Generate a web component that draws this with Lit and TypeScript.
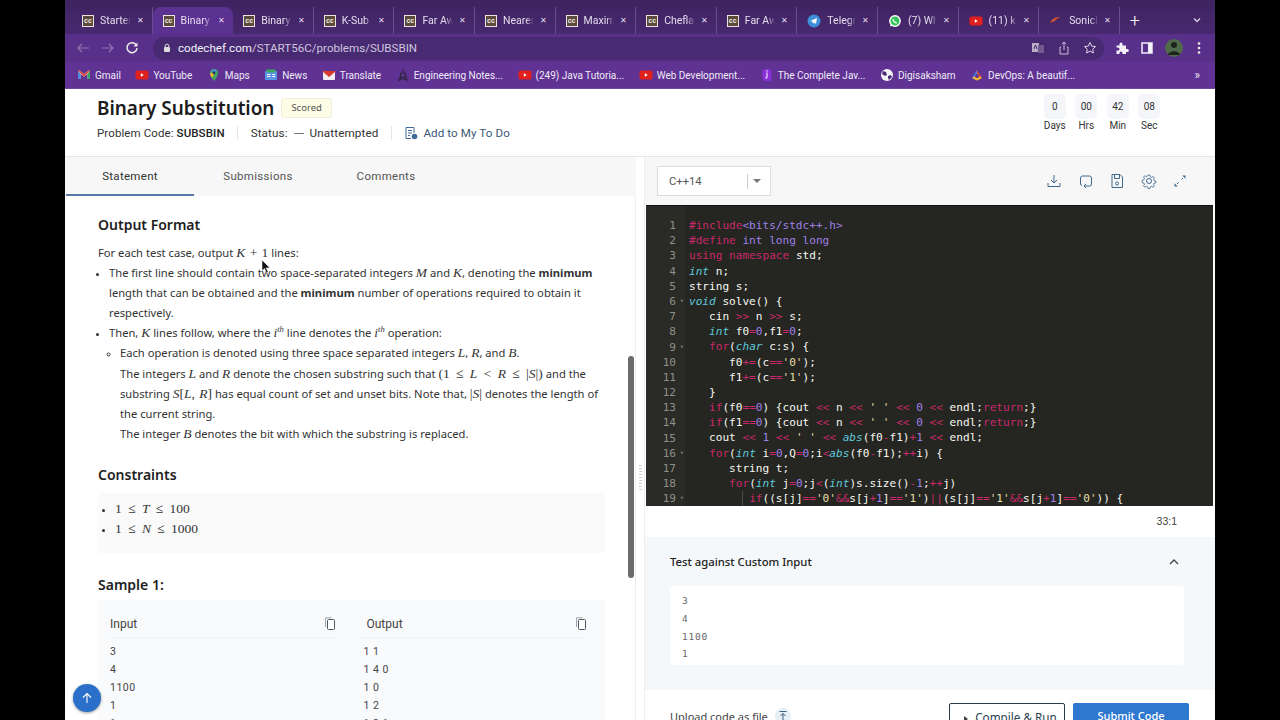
import { css, html, LitElement, svg } from "lit";
import { customElement } from "lit/decorators.js";

const ccIcon = html`<span class="cc">cc</span>`;

const tgIcon = svg`<circle cx="7" cy="7" r="6.5" fill="#3a8fd8"/><path d="M3 7l7-3-1 6-2-1.500-1 1.500-.5-2.500z" fill="#fff"/>`;
const waIcon = svg`<circle cx="7" cy="7" r="5.200" fill="#35c45a" stroke="#fff" stroke-width="1.400"/><path d="M2 12.500l1-3 2 2z" fill="#fff"/><path d="M5 5c0 2 2 4 4 4" stroke="#fff" stroke-width="1.200" fill="none"/>`;
const ytIcon = svg`<rect x="0.500" y="2.500" width="13" height="9" rx="2" fill="#e0201c"/><path d="M5.800 5.200v3.600l3-1.800z" fill="#fff"/>`;
const sonicIcon = svg`<path d="M1 9c2-5 6-6 11-6-4 1-6 3-7 5-1-1-2 0-4 1z" fill="#d8542a"/>`;
const gmailIcon = svg`<path d="M1 3v8h2.500V6L7 8.700 10.500 6v5H13V3l-1.500-.5L7 6 2.500 2.500z" fill="#d8dce0"/><path d="M1 3l2.500 3v5H1z" fill="#4c8be0"/><path d="M13 3l-2.500 3v5H13z" fill="#3aa860"/><path d="M1 3l1.500-.5L7 6l4.500-3.500L13 3 7 8.700z" fill="#dc4a3c"/>`;
const mapsIcon = svg`<path d="M7 1a4 4 0 0 1 4 4c0 3-4 8-4 8S3 8 3 5a4 4 0 0 1 4-4z" fill="#3aa860"/><path d="M4 3l3 2 3-2.500A4 4 0 0 0 4 3z" fill="#4c8be0"/><path d="M3 5c0 1.500 1 3.300 2 5l3-5z" fill="#eabb30"/><circle cx="7" cy="5" r="1.400" fill="#3b2a5e"/>`;
const newsIcon = svg`<rect x="1" y="3" width="12" height="9" rx="1" fill="#5a94e8"/><rect x="2.500" y="1.500" width="9" height="3" fill="#3aa860"/><path d="M3 6.500h3.500M3 8.500h3.500M8 6.500h3M8 8.500h3" stroke="#fff" stroke-width="1"/>`;
const translateIcon = svg`<rect x="1" y="3" width="12" height="9" rx="1" fill="#f0eef2"/><path d="M1 3l6 5 6-5" fill="#d83a30"/><path d="M1 3l6 5 6-5" stroke="#d83a30" stroke-width="1.500" fill="none"/>`;
const engIcon = svg`<path d="M7 1v3M5 5h4l1 4H4zM3 13l3-4M11 13l-3-4M2 11h10" stroke="#2b2238" stroke-width="1.100" fill="none"/>`;
const jsIcon = svg`<rect x="2.500" y="1" width="9" height="12" rx="3" fill="#8a30d8"/><path d="M7 4.500v5c0 1-1.500 1-1.500 0" stroke="#fff" fill="none"/><circle cx="7" cy="3" r=".7" fill="#fff"/>`;
const digiIcon = svg`<circle cx="7" cy="7" r="6" fill="#f5f5f5"/><path d="M3 3l3 1 1 3-2 1-3-2zM8 8l3-1 1 2-3 3-1-2z" fill="#4b2a78"/>`;
const devIcon = svg`<path d="M7 2l5 8-5 2.500z" fill="#e8483a"/><path d="M7 2L2 10l5 2.500z" fill="#3f86e8"/><path d="M2 10l5 2.500 5-2.500-5-3z" fill="#f0b429"/><circle cx="7" cy="8" r="2" fill="#5f3294"/>`;

const tabs: [string, any][] = [
  ["Starter", ccIcon],
  ["Binary", ccIcon],
  ["Binary", ccIcon],
  ["K-Sub", ccIcon],
  ["Far Aw", ccIcon],
  ["Neares", ccIcon],
  ["Maxim", ccIcon],
  ["Chefla", ccIcon],
  ["Far Aw", ccIcon],
  ["Telegr", html`<svg width="14" height="14" viewBox="0 0 14 14">${tgIcon}</svg>`],
  ["(7) Wh", html`<svg width="14" height="14" viewBox="0 0 14 14">${waIcon}</svg>`],
  ["(11) k-", html`<svg width="14" height="14" viewBox="0 0 14 14">${ytIcon}</svg>`],
  ["Sonick", html`<svg width="14" height="14" viewBox="0 0 14 14">${sonicIcon}</svg>`],
];

const bookmarks: [string, any][] = [
  ["Gmail", gmailIcon],
  ["YouTube", ytIcon],
  ["Maps", mapsIcon],
  ["News", newsIcon],
  ["Translate", translateIcon],
  ["Engineering Notes...", engIcon],
  ["(249) Java Tutoria...", ytIcon],
  ["Web Development...", ytIcon],
  ["The Complete Jav...", jsIcon],
  ["Digisaksham", digiIcon],
  ["DevOps: A beautif...", devIcon],
];

const code = [
  "#include<bits/stdc++.h>",
  "#define int long long",
  "using namespace std;",
  "int n;",
  "string s;",
  "void solve() {",
  "   cin >> n >> s;",
  "   int f0=0,f1=0;",
  "   for(char c:s) {",
  "      f0+=(c=='0');",
  "      f1+=(c=='1');",
  "   }",
  "   if(f0==0) {cout << n << ' ' << 0 << endl;return;}",
  "   if(f1==0) {cout << n << ' ' << 0 << endl;return;}",
  "   cout << 1 << ' ' << abs(f0-f1)+1 << endl;",
  "   for(int i=0,Q=0;i<abs(f0-f1);++i) {",
  "      string t;",
  "      for(int j=0;j<(int)s.size()-1;++j)",
  "         if((s[j]=='0'&&s[j+1]=='1')||(s[j]=='1'&&s[j+1]=='0')) {",
];
const foldLines = [6, 9, 16, 19];

// small regex highlighter, monokai-ish classes
const tokenRe =
  /(#include|#define|\busing\b|\bnamespace\b|\breturn\b|\bif\b|\bfor\b)|(\bint\b|\bchar\b|\bvoid\b|\babs\b)|('.')|(\b\d+\b)|(>>|<<|==|\+=|\+\+|&&|\|\||=|\+|-|<)/g;

function highlight(line: string) {
  if (line.startsWith("#include")) {
    return html`<span class="k">#include</span><span class="p">${line.slice(8)}</span>`;
  }
  if (line.startsWith("#define")) {
    return html`<span class="k">#define</span><span class="p">${line.slice(7)}</span>`;
  }
  const parts: unknown[] = [];
  let last = 0;
  for (const m of line.matchAll(tokenRe)) {
    parts.push(line.slice(last, m.index));
    const cls = m[1] ? "k" : m[2] ? "t" : m[3] ? "s" : m[4] ? "p" : "k";
    parts.push(html`<span class=${cls}>${m[0]}</span>`);
    last = m.index! + m[0].length;
  }
  parts.push(line.slice(last));
  return parts;
}

@customElement("app-root")
export class AppRoot extends LitElement {
  renderBrowser() {
    return html`<div class="tabstrip">
        ${tabs.map(
          ([name, icon], i) => html`<div class="tab ${i === 1 ? "on" : ""}">
            ${icon}<span class="tabname">${name}</span><span class="x">✕</span>
          </div>`
        )}
        <span class="plus">+</span>
        <svg class="tabdown" width="10" height="10" viewBox="0 0 10 10">
          <path d="M2 3.500l3 3 3-3" stroke="#d8cfe6" stroke-width="1.300" fill="none" />
        </svg>
      </div>
      <div class="toolbar">
        <svg width="16" height="14" viewBox="0 0 16 14"><path d="M14 7H3M7 3L3 7l4 4" stroke="#8d74ad" stroke-width="1.200" fill="none" /></svg>
        <svg width="16" height="14" viewBox="0 0 16 14"><path d="M2 7h11M9 3l4 4-4 4" stroke="#8d74ad" stroke-width="1.200" fill="none" /></svg>
        <svg width="14" height="14" viewBox="0 0 14 14"><path d="M11.500 4.500A5 5 0 1 0 12 7" stroke="#eee" stroke-width="1.500" fill="none" /><path d="M12.500 1.500v4h-4z" fill="#eee" /></svg>
        <div class="omnibox">
          <svg width="8" height="10" viewBox="0 0 8 10"><rect x="1" y="4" width="6" height="5" rx="1" fill="#ddd" /><path d="M2.200 4V3a1.800 1.800 0 0 1 3.600 0v1" stroke="#ddd" fill="none" /></svg>
          <span class="url"><b>codechef.com</b>/START56C/problems/SUBSBIN</span>
          <span class="omniright">
            <svg width="14" height="14" viewBox="0 0 14 14"><rect x="1" y="2" width="7" height="9" fill="#b9afc7" /><rect x="7" y="4" width="6" height="8" fill="#6f5a8f" /><path d="M3 8l1.500-4L6 8" stroke="#4a2a72" fill="none" /></svg>
            <svg width="14" height="14" viewBox="0 0 14 14"><path d="M4 6H3v7h8V6h-1M7 9V1M5 3l2-2 2 2" stroke="#c9bdd8" fill="none" /></svg>
            <svg width="14" height="14" viewBox="0 0 14 14"><path d="M7 1.500l1.700 3.600 3.800.5-2.800 2.600.7 3.800L7 10.100 3.600 12l.7-3.800L1.500 5.600l3.800-.5z" stroke="#dcd4e6" fill="none" /></svg>
          </span>
        </div>
        <span class="extras">
          <svg width="14" height="14" viewBox="0 0 14 14"><path d="M1.500 4.500h3V3a1.500 1.500 0 0 1 3 0v1.500h3.500V8h1.300a1.500 1.500 0 0 1 0 3H11v2H7.500v-1a1.500 1.500 0 0 0-3 0v1h-3V9.500H3a1.500 1.500 0 0 0 0-3H1.500z" fill="#f4f0f8" /></svg>
          <svg width="14" height="14" viewBox="0 0 14 14"><rect x="2" y="2" width="10" height="10" fill="none" stroke="#f4f0f8" stroke-width="1.500" /><rect x="8" y="2" width="4" height="10" fill="#f4f0f8" /></svg>
          <svg width="18" height="18" viewBox="0 0 18 18"><circle cx="9" cy="9" r="9" fill="#4f6b4a" /><circle cx="9" cy="6" r="3" fill="#1d241c" /><path d="M3 16c1-5 11-5 12 0z" fill="#1d241c" /></svg>
          <svg class="dots" width="4" height="14" viewBox="0 0 4 14"><circle cx="2" cy="2.500" r="1.300" fill="#eee" /><circle cx="2" cy="7" r="1.300" fill="#eee" /><circle cx="2" cy="11.500" r="1.300" fill="#eee" /></svg>
        </span>
      </div>
      <div class="bookmarks">
        ${bookmarks.map(
          ([name, icon]) => html`<span class="bm"
            ><svg width="14" height="14" viewBox="0 0 14 14">${icon}</svg>${name}</span
          >`
        )}
        <span class="more">»</span>
      </div>`;
  }

  renderHeader() {
    const clock = [
      ["0", "Days"],
      ["00", "Hrs"],
      ["42", "Min"],
      ["08", "Sec"],
    ];
    return html`<header class="head">
      <div>
        <div class="titlerow">
          <h1>Binary Substitution</h1>
          <span class="badge">Scored</span>
        </div>
        <div class="meta">
          <span class="code">Problem Code: <b>SUBSBIN</b></span>
          <span class="status">Status: <i class="dash"></i> Unattempted</span>
          <span class="todo">
            <svg width="14" height="14" viewBox="0 0 14 14">
              <path d="M10 7V1.500H2v11h5M4 4.500h4M4 7h4M4 9.500h2" stroke="#3f6a9a" fill="none" />
              <circle cx="10.500" cy="10.500" r="2.800" fill="#3f6a9a" />
            </svg>
            Add to My To Do
          </span>
        </div>
      </div>
      <div class="clock">
        ${clock.map(
          ([n, l]) => html`<div class="unit"><span class="num">${n}</span><span>${l}</span></div>`
        )}
      </div>
    </header>`;
  }

  renderStatement() {
    return html`<section class="left">
      <nav class="lefttabs">
        <span class="ltab on">Statement</span>
        <span class="ltab">Submissions</span>
        <span class="ltab">Comments</span>
      </nav>
      <div class="leftbody">
        <article class="doc">
          <h2 class="first">Output Format</h2>
          <p>For each test case, output <span class="mr tight"><i>K</i> + 1</span> lines:</p>
          <ul>
            <li>
              The first line should contain two space-separated integers <i class="m">M</i> and
              <i class="m">K</i>, denoting the <b>minimum</b> length that can be obtained and the
              <b>minimum</b> number of operations required to obtain it respectively.
            </li>
            <li>
              Then, <i class="m">K</i> lines follow, where the <i class="m">i</i><sup>th</sup> line
              denotes the <i class="m">i</i><sup>th</sup> operation:
              <ul class="sub">
                <li>
                  Each operation is denoted using three space separated integers <i class="m">L</i>,
                  <i class="m">R</i>, and <i class="m">B</i>.<br />
                  The integers <i class="m">L</i> and <i class="m">R</i> denote the chosen substring
                  such that <span class="mr">(1 ≤ <i>L</i> &lt; <i>R</i> ≤ |<i>S</i>|)</span> and the
                  substring <span class="mr tight"><i>S</i>[<i>L</i>, <i>R</i>]</span> has equal count of
                  set and unset bits. Note that, <span class="mr">|<i>S</i>|</span> denotes the
                  length of the current string.<br />
                  The integer <i class="m">B</i> denotes the bit with which the substring is
                  replaced.
                </li>
              </ul>
            </li>
          </ul>
          <h2 class="cons">Constraints</h2>
          <ul class="limits">
            <li><span class="mr">1 ≤ <i>T</i> ≤ 100</span></li>
            <li><span class="mr">1 ≤ <i>N</i> ≤ 1000</span></li>
          </ul>
          <h2 class="samp">Sample 1:</h2>
          <div class="sample">
            <div class="scol">
              <div class="shead">Input ${this.copyIcon()}</div>
              <pre class="io">3
4
1100
1
1</pre>
            </div>
            <div class="scol out">
              <div class="shead">Output ${this.copyIcon()}</div>
              <pre class="io">1 1
1 4 0
1 0
1 2
1 3 1</pre>
            </div>
          </div>
        </article>
        <div class="scrollbar"><div class="thumb"></div></div>
      </div>
    </section>`;
  }

  copyIcon() {
    return html`<svg width="12" height="13" viewBox="0 0 12 13">
      <path d="M1.500 10V.8h6" stroke="#9aa3ad" fill="none" />
      <rect x="3.500" y="2.500" width="7" height="10" rx="1" stroke="#4c5660" fill="#fff" />
    </svg>`;
  }

  renderEditor() {
    return html`<section class="right">
      <div class="edbar">
        <div class="select">
          <span>C++14</span>
          <i class="caret"></i>
        </div>
        <div class="tools">
          <svg width="16" height="16" viewBox="0 0 16 16"><path d="M8 2v8M5 7l3 3 3-3M2 10v3.500h12V10" /></svg>
          <svg width="16" height="16" viewBox="0 0 16 16"><path d="M4 12.500A2 2 0 0 1 2.500 11V5A2 2 0 0 1 4.500 3h7a2 2 0 0 1 2 2v6a2 2 0 0 1-2 2H6M8 11l-2 2 2 2" /></svg>
          <svg width="16" height="16" viewBox="0 0 16 16"><path d="M3 1.500h8l2.500 2.500v10.500H3zM5.500 1.500v4h5v-4" /><circle cx="8" cy="10.500" r="1.500" /></svg>
          <svg width="16" height="16" viewBox="0 0 16 16"><circle cx="8" cy="8" r="2.500" /><path d="M6.800 1h2.400l.4 2 1.500.7 1.800-1.100 1.600 1.700-1.100 1.700.7 1.500 2 .4v2.200l-2 .4-.7 1.500 1.100 1.700-1.600 1.700-1.800-1.100-1.500.7-.4 2H6.800l-.4-2-1.500-.7-1.800 1.100-1.600-1.700 1.100-1.700-.7-1.500-2-.4V6.900l2-.4.7-1.500-1.100-1.700 1.600-1.700 1.800 1.100 1.500-.7z" transform="translate(1.300 1.300) scale(.84)" /></svg>
          <svg width="16" height="16" viewBox="0 0 16 16"><path class="fill" d="M13.500 2.500v3.200l-3.200-3.200zM2.500 13.500v-3.200l3.200 3.200z" /><path d="M11 5l-1.500 1.500M5 11l1.500-1.500" /></svg>
        </div>
      </div>
      <div class="editor">
        <div class="gutter">
          ${code.map(
            (_, i) => html`<div class="gl">
              ${i + 1}<span class="fold">${foldLines.includes(i + 1) ? "▾" : ""}</span>
            </div>`
          )}
        </div>
        <pre class="src">${code.map(
          (l, i) => html`<div class="cl ${i === 18 ? "guide" : ""}">${highlight(l)}</div>`
        )}</pre>
      </div>
      <div class="pos">33:1</div>
      <div class="custom">
        <div class="chead">
          <span>Test against Custom Input</span>
          <svg width="12" height="12" viewBox="0 0 12 12"><path d="M2 8l4-4 4 4" stroke="#444" stroke-width="1.300" fill="none" /></svg>
        </div>
        <pre class="cinput">3
4
1100
1</pre>
      </div>
      <div class="actions">
        <span class="upload">
          Upload code as file
          <i class="upicon">
            <svg width="12" height="12" viewBox="0 0 12 12"><path d="M2.500 1.500h7M6 11V3.500M3.500 6L6 3.500 8.500 6" stroke="#3f5f80" fill="none" /></svg>
          </i>
        </span>
        <span class="btns">
          <span class="btn ghost"><i class="play"></i>Compile &amp; Run</span>
          <span class="btn solid">Submit Code</span>
        </span>
      </div>
    </section>`;
  }

  render() {
    return html`<div class="frame">
      ${this.renderBrowser()}
      <div class="page">
        ${this.renderHeader()}
        <div class="work">
          ${this.renderStatement()}
          <div class="split"><i></i></div>
          ${this.renderEditor()}
        </div>
        <button class="fab">
          <svg width="12" height="12" viewBox="0 0 12 12"><path d="M6 11V1.500M2 5.500l4-4 4 4" stroke="#fff" stroke-width="1.100" fill="none" /></svg>
        </button>
        <svg class="pointer" width="10" height="14" viewBox="0 0 10 14"><path d="M1 0v11l2.500-2.500L5.500 13l1.800-.8-2-4.300H9z" fill="#111" stroke="#fff" stroke-width=".6" /></svg>
      </div>
    </div>`;
  }

  static styles = css`
    :host {
      display: block;
      width: 1280px;
      height: 720px;
      overflow: hidden;
      background: #000;
      font-family: "Noto Sans", sans-serif;
      color: #222;
    }
    svg {
      display: block;
      flex: none;
    }
    .frame {
      width: 1150px;
      height: 720px;
      margin-left: 65px;
      display: flex;
      flex-direction: column;
      overflow: hidden;
    }

    /* browser chrome */
    .tabstrip {
      height: 34px;
      flex: none;
      display: flex;
      align-items: flex-end;
      padding-left: 7px;
      background: linear-gradient(#3d2360, #48296f);
      box-sizing: border-box;
    }
    .tab {
      width: 80.6px;
      height: 27px;
      box-sizing: border-box;
      display: flex;
      align-items: center;
      padding: 0 8px 0 10px;
      gap: 6px;
      font: 10.5px Roboto, sans-serif;
      color: #e4dcee;
      border-right: 1px solid #6a4d8e;
    }
    .tab.on {
      background: #5b3191;
      border-radius: 8px 8px 0 0;
      border-right: 0;
    }
    .cc {
      width: 12px;
      height: 12px;
      flex: none;
      box-sizing: border-box;
      border: 1px solid #e9e4dc;
      background: #5c4a3c;
      color: #f0ebe2;
      font: bold 7px/9px "Liberation Sans", sans-serif;
      text-align: center;
    }
    .tabname {
      width: 34px;
      overflow: hidden;
      white-space: nowrap;
      -webkit-mask-image: linear-gradient(90deg, #000 75%, transparent);
      mask-image: linear-gradient(90deg, #000 75%, transparent);
    }
    .x {
      font-size: 8px;
      margin-left: auto;
      color: #e4dcee;
    }
    .plus {
      color: #fff;
      font: 300 18px/27px Roboto, sans-serif;
      margin-left: 10px;
      width: 50px;
    }
    .tabdown {
      margin-left: auto;
      margin-right: 13px;
      margin-bottom: 9px;
    }
    .toolbar {
      height: 28px;
      flex: none;
      display: flex;
      align-items: center;
      padding-left: 10px;
      gap: 9px;
      background: #58308a;
    }
    .omnibox {
      flex: none;
      width: 951px;
      margin-left: 5px;
      height: 23px;
      border-radius: 12px;
      background: #472a72;
      display: flex;
      align-items: center;
      padding: 0 7px 0 10px;
      box-sizing: border-box;
      gap: 7px;
    }
    .url {
      font: 11.6px Roboto, sans-serif;
      color: #cfc4de;
    }
    .url b {
      font-weight: 400;
      color: #f4f0f8;
    }
    .omniright {
      margin-left: auto;
      display: flex;
      gap: 12px;
    }
    .extras {
      display: flex;
      align-items: center;
      gap: 11px;
      margin-left: 2px;
    }
    .dots {
      margin-left: 3px;
    }
    .bookmarks {
      height: 27px;
      flex: none;
      display: flex;
      align-items: center;
      gap: 14.5px;
      padding-left: 12px;
      background: #5f3294;
      border-bottom: 1px solid #6d4aa0;
      box-sizing: border-box;
      font: 10px Roboto, sans-serif;
      color: #f0ebf6;
      white-space: nowrap;
    }
    .bm {
      display: flex;
      align-items: center;
      gap: 4px;
    }
    .more {
      margin-left: auto;
      margin-right: 15px;
      font-size: 12px;
    }

    /* page */
    .page {
      flex: 1;
      min-height: 0;
      position: relative;
      background: #fff;
      display: flex;
      flex-direction: column;
    }
    .head {
      height: 68px;
      flex: none;
      box-sizing: border-box;
      border-bottom: 1px solid #e6e6e8;
      display: flex;
      justify-content: space-between;
      padding: 5px 50px 0 32px;
    }
    .titlerow {
      display: flex;
      align-items: center;
      gap: 7px;
      height: 28px;
    }
    h1 {
      margin: 0;
      font: 600 18.9px "Noto Sans", sans-serif;
      color: #1c1c1c;
    }
    .badge {
      font: 9.500px/18px "Noto Sans", sans-serif;
      padding: 0 9px;
      border: 1px solid #eeeedd;
      border-radius: 3px;
      background: #fdfde6;
      color: #555;
    }
    .meta {
      display: flex;
      align-items: center;
      margin-top: 4px;
      font: 11.500px Roboto, sans-serif;
      color: #333;
      letter-spacing: 0.1px;
    }
    .meta b {
      font-weight: 500;
      color: #222;
    }
    .code {
      padding-right: 12px;
      border-right: 1px solid #e4e4e4;
    }
    .status {
      padding: 0 13px;
      border-right: 1px solid #e4e4e4;
      display: flex;
      align-items: center;
      gap: 6px;
      font-size: 11.7px;
    }
    .dash {
      width: 10px;
      height: 1px;
      background: #777;
    }
    .todo {
      display: flex;
      align-items: center;
      gap: 5px;
      padding-left: 12px;
      color: #3c5876;
      font-size: 11.6px;
    }
    .clock {
      display: flex;
      font: 10px Roboto, sans-serif;
      color: #333;
    }
    .unit {
      width: 31.500px;
      display: flex;
      flex-direction: column;
      align-items: center;
      gap: 1px;
    }
    .num {
      width: 22px;
      height: 25px;
      line-height: 25px;
      text-align: center;
      border-radius: 5px;
      background: #f4f6fa;
    }
    .work {
      flex: 1;
      min-height: 0;
      display: grid;
      grid-template-columns: 571px 9px 570px;
    }
    .left {
      display: flex;
      flex-direction: column;
      min-height: 0;
      overflow: hidden;
    }
    .lefttabs {
      height: 39px;
      flex: none;
      display: flex;
      background: #f7f7f8;
      font: 11.500px Roboto, sans-serif;
      color: #555;
      letter-spacing: 0.3px;
      box-sizing: border-box;
      padding-left: 1px;
    }
    .ltab {
      width: 128px;
      text-align: center;
      line-height: 39px;
      box-sizing: border-box;
    }
    .ltab.on {
      color: #333;
      border-bottom: 2px solid #5878a6;
    }
    .leftbody {
      flex: 1;
      min-height: 0;
      display: flex;
      border-right: 1px solid #eee;
    }
    .doc {
      flex: 1;
      min-width: 0;
      padding: 0 23px 0 33px;
      font-size: 11.2px;
      line-height: 20.100px;
      color: #333;
    }
    h2 {
      margin: 0;
      font: 600 14px/20px "Noto Sans", sans-serif;
      color: #1e1e1e;
    }
    h2.first {
      margin-top: 19px;
    }
    h2.cons {
      margin-top: 21px;
    }
    h2.samp {
      margin-top: 22px;
    }
    .doc p {
      margin: 8px 0 0;
    }
    .doc ul {
      margin: 0;
      padding-left: 11px;
    }
    .doc ul.sub {
      list-style: circle;
    }
    .doc li::marker {
      font-size: 9px;
    }
    .doc b {
      font-weight: 700;
    }
    .doc sup {
      font: italic 8.500px/0 "Liberation Serif", serif;
    }
    .m,
    .mr {
      font-family: "Liberation Serif", serif;
      font-size: 13.5px;
      line-height: 0;
    }
    .mr {
      word-spacing: 3px;
    }
    .mr.tight {
      word-spacing: 1px;
    }
    .limits {
      margin-top: 8px !important;
      height: 60px;
      box-sizing: border-box;
      padding: 6px 0 0 17px !important;
      background: #fafafa;
    }
    .sample {
      margin-top: 5px;
      background: #f9fafc;
      display: grid;
      grid-template-columns: 1fr 1fr;
      height: 200px;
      padding: 0 12px;
      font: 10.500px Roboto, sans-serif;
    }
    .shead {
      display: flex;
      justify-content: space-between;
      align-items: center;
      height: 38px;
      box-sizing: border-box;
      padding: 11px 2px 0 0;
      border-bottom: 1px solid #f0f1f3;
      font-size: 12px;
      color: #444;
    }
    .scol.out .shead {
      margin-left: 5px;
      margin-right: 6px;
      padding-left: 10px;
      padding-right: 0;
    }
    .scol:first-child .shead {
      margin-right: 16px;
      padding-right: 0;
    }
    .io {
      margin: 5px 0 0 0;
      font: 10.500px/18px Roboto, sans-serif;
      color: #444;
      letter-spacing: 0.5px;
    }
    .out .io {
      margin-left: 12px;
    }
    .scrollbar {
      width: 6px;
      margin-right: 1px;
      flex: none;
    }
    .thumb {
      margin-top: 160px;
      height: 222px;
      border-radius: 3px;
      background: #6b6b6b;
    }
    .split {
      display: flex;
      align-items: center;
      justify-content: center;
      border-right: 1px solid #eee;
    }
    .split i {
      display: block;
      width: 3px;
      height: 26px;
      margin-top: 78px;
      background: repeating-linear-gradient(#ccc 0 1px, transparent 1px 3px);
    }
    .right {
      display: flex;
      flex-direction: column;
      min-height: 0;
      overflow: hidden;
    }
    .edbar {
      height: 48px;
      flex: none;
      box-sizing: border-box;
      background: #f7f7f8;
      display: flex;
      align-items: center;
      justify-content: space-between;
      padding: 0 27px 0 12px;
    }
    .select {
      width: 114px;
      height: 30px;
      box-sizing: border-box;
      border: 1px solid #dcdcdc;
      background: #fff;
      display: flex;
      align-items: center;
      padding-left: 11px;
      font: 11.2px Roboto, sans-serif;
      color: #555;
      position: relative;
    }
    .caret {
      margin-left: auto;
      margin-right: 9px;
      border-top: 4px solid #777;
      border-left: 4px solid transparent;
      border-right: 4px solid transparent;
    }
    .select::after {
      content: "";
      position: absolute;
      left: 89px;
      top: 7px;
      height: 15px;
      border-left: 1px solid #ccc;
    }
    .tools {
      display: flex;
      gap: 15.500px;
    }
    .tools svg {
      stroke: #3f6a8e;
      fill: none;
      stroke-width: 1;
    }
    .tools .fill {
      fill: #3f6a8e;
      stroke: none;
    }
    .editor {
      height: 301px;
      flex: none;
      margin: 0 2px 0 1px;
      background: #252621;
      border-top: 1px solid #111;
      box-sizing: border-box;
      display: flex;
      overflow: hidden;
      padding-top: 12px;
      font: 11.100px/15.180px "DejaVu Sans Mono", monospace;
      color: #f8f8f2;
    }
    .gutter {
      width: 39px;
      flex: none;
      color: #8f908a;
      margin-top: -12px;
      padding-top: 12px;
      background: #2a2b26;
      margin-bottom: -12px;
    }
    .gl {
      display: flex;
      justify-content: flex-end;
      align-items: center;
    }
    .fold {
      width: 9px;
      font-size: 7px;
      text-align: right;
      padding-right: 1px;
      box-sizing: border-box;
      color: #777;
    }
    .src {
      margin: 0 0 0 4px;
      font: inherit;
    }
    .cl {
      height: 15.180px;
    }
    .cl.guide {
      background: linear-gradient(#4a4a44, #4a4a44) 53px 0 / 1px 100% no-repeat;
    }
    .k {
      color: #c9286a;
    }
    .t {
      color: #5fc8dc;
      font-style: italic;
    }
    .s {
      color: #e4dfa8;
    }
    .p {
      color: #9f80e6;
    }
    .pos {
      height: 31px;
      flex: none;
      box-sizing: border-box;
      padding-right: 38px;
      text-align: right;
      font: 10.500px/31px "Liberation Sans", sans-serif;
      color: #444;
    }
    .custom {
      height: 153px;
      flex: none;
      box-sizing: border-box;
      background: #f5f8fa;
      padding: 0 31px 0 25px;
    }
    .chead {
      height: 49px;
      display: flex;
      align-items: center;
      justify-content: space-between;
      font: 500 11.3px "Noto Sans", sans-serif;
      color: #222;
      padding-right: 4px;
    }
    .cinput {
      margin: 0;
      height: 79px;
      box-sizing: border-box;
      padding: 6px 12px;
      background: #fff;
      border-radius: 3px;
      font: 9.500px/17.800px "DejaVu Sans Mono", monospace;
      letter-spacing: 0.8px;
      color: #666;
    }
    .actions {
      flex: 1;
      display: flex;
      justify-content: space-between;
      padding: 13px 26px 0 25px;
      font: 11px "Noto Sans", sans-serif;
      color: #444;
    }
    .upload {
      display: flex;
      align-items: center;
      gap: 7px;
      height: 22px;
      margin-top: 2px;
    }
    .upicon {
      width: 16px;
      height: 16px;
      border-radius: 50%;
      background: #e6eef6;
      display: grid;
      place-items: center;
    }
    .btns {
      display: flex;
      gap: 8px;
    }
    .btn {
      width: 116px;
      height: 30px;
      box-sizing: border-box;
      border-radius: 2px;
      text-align: center;
      line-height: 26px;
      font-size: 11px;
    }
    .ghost {
      border: 1px solid #2a3a4a;
      color: #2c3e50;
      font-size: 11.7px;
      padding-left: 7px;
    }
    .solid {
      background: #2f78d0;
      color: #fff;
      font-weight: 500;
    }
    .play {
      display: inline-block;
      border-left: 4px solid #444;
      border-top: 3px solid transparent;
      border-bottom: 3px solid transparent;
      margin-right: 7px;
    }
    .fab {
      position: absolute;
      left: 8px;
      top: 595px;
      width: 28px;
      height: 28px;
      padding: 0;
      border: 0;
      border-radius: 50%;
      background: #2a6fc9;
      box-shadow: 0 1px 3px rgba(0, 0, 0, 0.4);
      display: grid;
      place-items: center;
    }
    .pointer {
      position: absolute;
      left: 196px;
      top: 171px;
    }
  `;
}
